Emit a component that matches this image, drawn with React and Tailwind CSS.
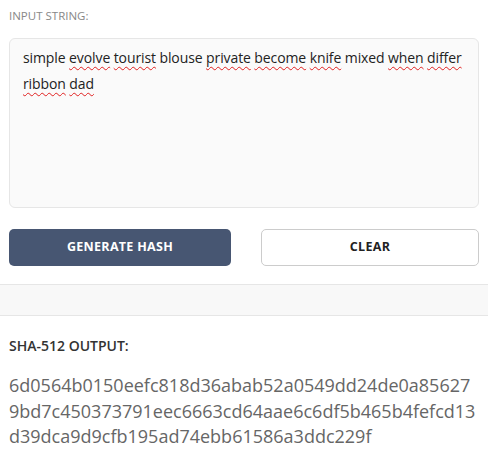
import React from "react";

const W = ({ children }) => (
  <span className="underline decoration-wavy decoration-[#e02020] decoration-1 underline-offset-[3px]">{children}</span>
);

export default function App() {
  return (
    <div className="w-[488px] h-[459px] bg-white overflow-hidden font-['Open_Sans',sans-serif]">
      <div className="px-[9px] pt-[8px]">
        <div className="text-[11.5px] leading-[16px] text-[#888] uppercase">Input string:</div>
        <div className="mt-[14px] h-[170px] rounded-[6px] border border-[#e6e6e6] bg-[#fafafa] pl-[13px] pr-[2px] pt-[6px] text-[14px] leading-[26px] text-[#222] tracking-[-0.1px]">
          simple <W>evolve</W> <W>tourist</W> blouse <W>private</W> <W>become</W> <W>knife</W> mixed <W>when</W> <W>differ</W>
          <br />
          <W>ribbon</W> <W>dad</W>
        </div>
        <div className="mt-[21px] flex gap-[30px]">
          <button className="w-[222px] h-[37px] rounded-[5px] bg-[#475672] text-white text-[12.5px] font-bold tracking-[0.3px]">
            GENERATE HASH
          </button>
          <button className="flex-1 h-[37px] rounded-[5px] border border-[#cccccc] bg-white text-[#222] text-[12.5px] font-bold tracking-[0.3px]">
            CLEAR
          </button>
        </div>
      </div>
      <div className="mt-[18px] h-[32px] bg-[#f8f8f8] border-y border-[#e6e6e6]"></div>
      <div className="px-[9px] pt-[21px]">
        <div className="text-[14px] leading-[18px] font-semibold text-[#333]">SHA-512 OUTPUT:</div>
        <div className="mt-[18px] text-[18px] leading-[25.5px] text-[#666] break-all">
          6d0564b0150eefc818d36abab52a0549dd24de0a85627
          9bd7c450373791eec6663cd64aae6c6df5b465b4fefcd13
          d39dca9d9cfb195ad74ebb61586a3ddc229f
        </div>
      </div>
    </div>
  );
}
